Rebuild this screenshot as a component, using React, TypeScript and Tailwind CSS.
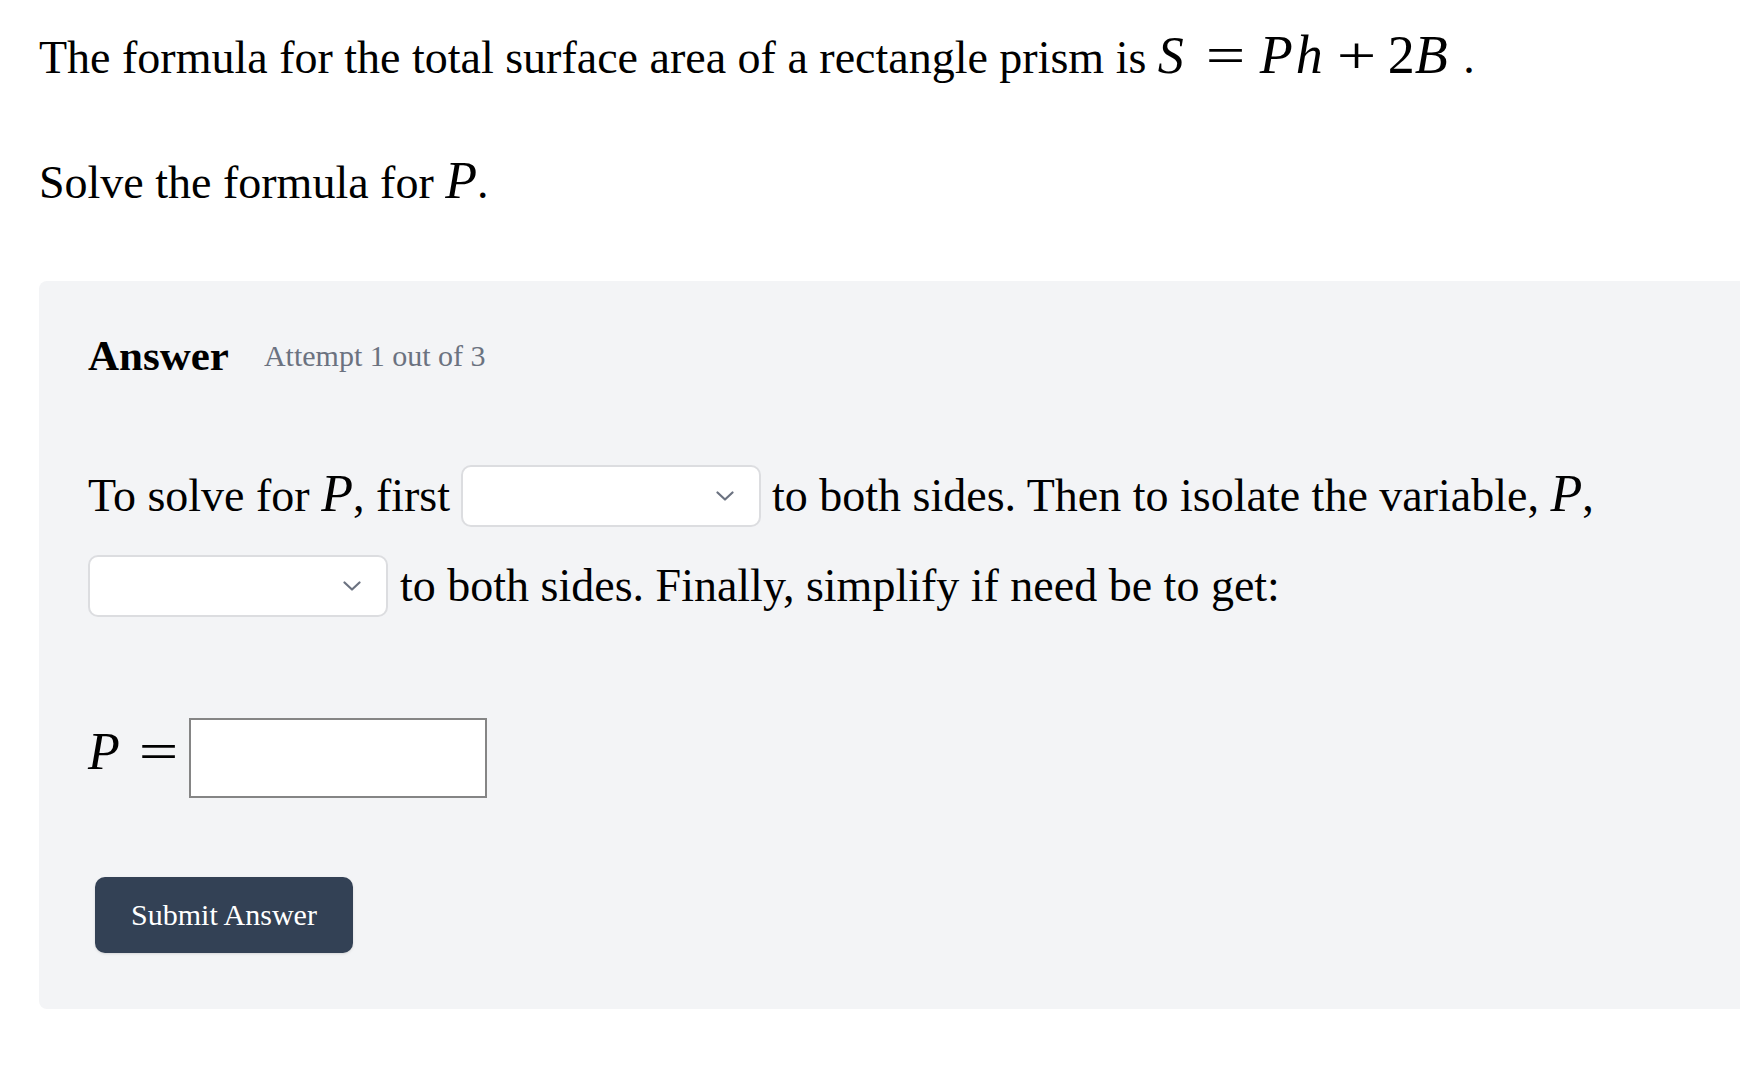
import React from "react";

function MathI({ children, size = "text-[52px]" }: { children: React.ReactNode; size?: string }) {
  return <span className={`italic leading-none ${size}`}>{children}</span>;
}

function Op({ children, width, className }: { children: React.ReactNode; width: string; className: string }) {
  return (
    <span className={`inline-block text-center text-[52px] leading-none ${width} ${className}`}>
      <span className="inline-block scale-x-[1.35]">{children}</span>
    </span>
  );
}

function Chevron() {
  return (
    <svg width="18" height="10" viewBox="0 0 18 10" fill="none" className="shrink-0">
      <polyline points="1.5,1.5 9,8.5 16.5,1.5" stroke="#6b7280" strokeWidth="2.2" strokeLinecap="round" strokeLinejoin="round" />
    </svg>
  );
}

function SelectBox() {
  return (
    <div className="flex h-[62px] w-[300px] shrink-0 items-center justify-end rounded-[10px] border-2 border-[#dcdde0] bg-white pr-[25px]">
      <Chevron />
    </div>
  );
}

export default function App() {
  return (
    <div className="min-h-screen bg-white font-['Liberation_Serif',serif] text-black">
      <div className="pl-[39px] pt-[28px]">
        <p className="whitespace-nowrap text-[46px] leading-[60px]">
          The formula for the total surface area of a rectangle prism is{" "}
          <MathI>S</MathI>
          <Op width="w-[35px]" className="ml-[24px] mr-[17px]">=</Op>
          <span className="tracking-[3px]">
            <MathI size="text-[54px]">P</MathI>
          </span>
          <MathI size="text-[54px]">h</MathI>
          <Op width="w-[33px]" className="ml-[17px] mr-[15px]">+</Op>
          <span className="text-[54px] leading-none">2</span>
          <MathI size="text-[54px]">B</MathI>
          <span className="ml-[4px]"> .</span>
        </p>
        <p className="mt-[65px] text-[46px] leading-[60px]">
          Solve the formula for <MathI>P</MathI>.
        </p>

        <div className="mt-[68px] rounded-l-lg bg-[#f3f4f6] pb-[56px] pl-[49px] pt-[54px]">
          <div className="flex h-[42px] items-center gap-[35px]">
            <span className="text-[43px] font-bold leading-[42px]">Answer</span>
            <span className="text-[30px] leading-[30px] text-[#6b7280]">Attempt 1 out of 3</span>
          </div>

          <div className="mt-[88px] flex h-[62px] items-center whitespace-nowrap text-[46px] leading-[62px]">
            <span>
              To solve for <MathI>P</MathI>, first
            </span>
            <div className="ml-[11px] mr-[11px]">
              <SelectBox />
            </div>
            <span>
              to both sides. Then to isolate the variable, <MathI>P</MathI>,
            </span>
          </div>

          <div className="mt-[28px] flex h-[62px] items-center whitespace-nowrap text-[46px] leading-[62px]">
            <SelectBox />
            <span className="ml-[12px]">to both sides. Finally, simplify if need be to get:</span>
          </div>

          <div className="mt-[101px] flex h-[80px] items-center">
            <span className="mb-[13px] flex items-baseline whitespace-nowrap leading-[52px]">
              <MathI>P</MathI>
              <Op width="w-[35px]" className="ml-[21px] mr-[13px]">=</Op>
            </span>
            <input
              type="text"
              className="h-[80px] w-[298px] border-2 border-[#858585] bg-white outline-none"
              aria-label="P"
            />
          </div>

          <button
            type="button"
            className="ml-[7px] mt-[79px] block h-[76px] w-[258px] rounded-[10px] bg-[#334155] text-[30px] leading-none text-white shadow-sm"
          >
            Submit Answer
          </button>
        </div>
      </div>
    </div>
  );
}
